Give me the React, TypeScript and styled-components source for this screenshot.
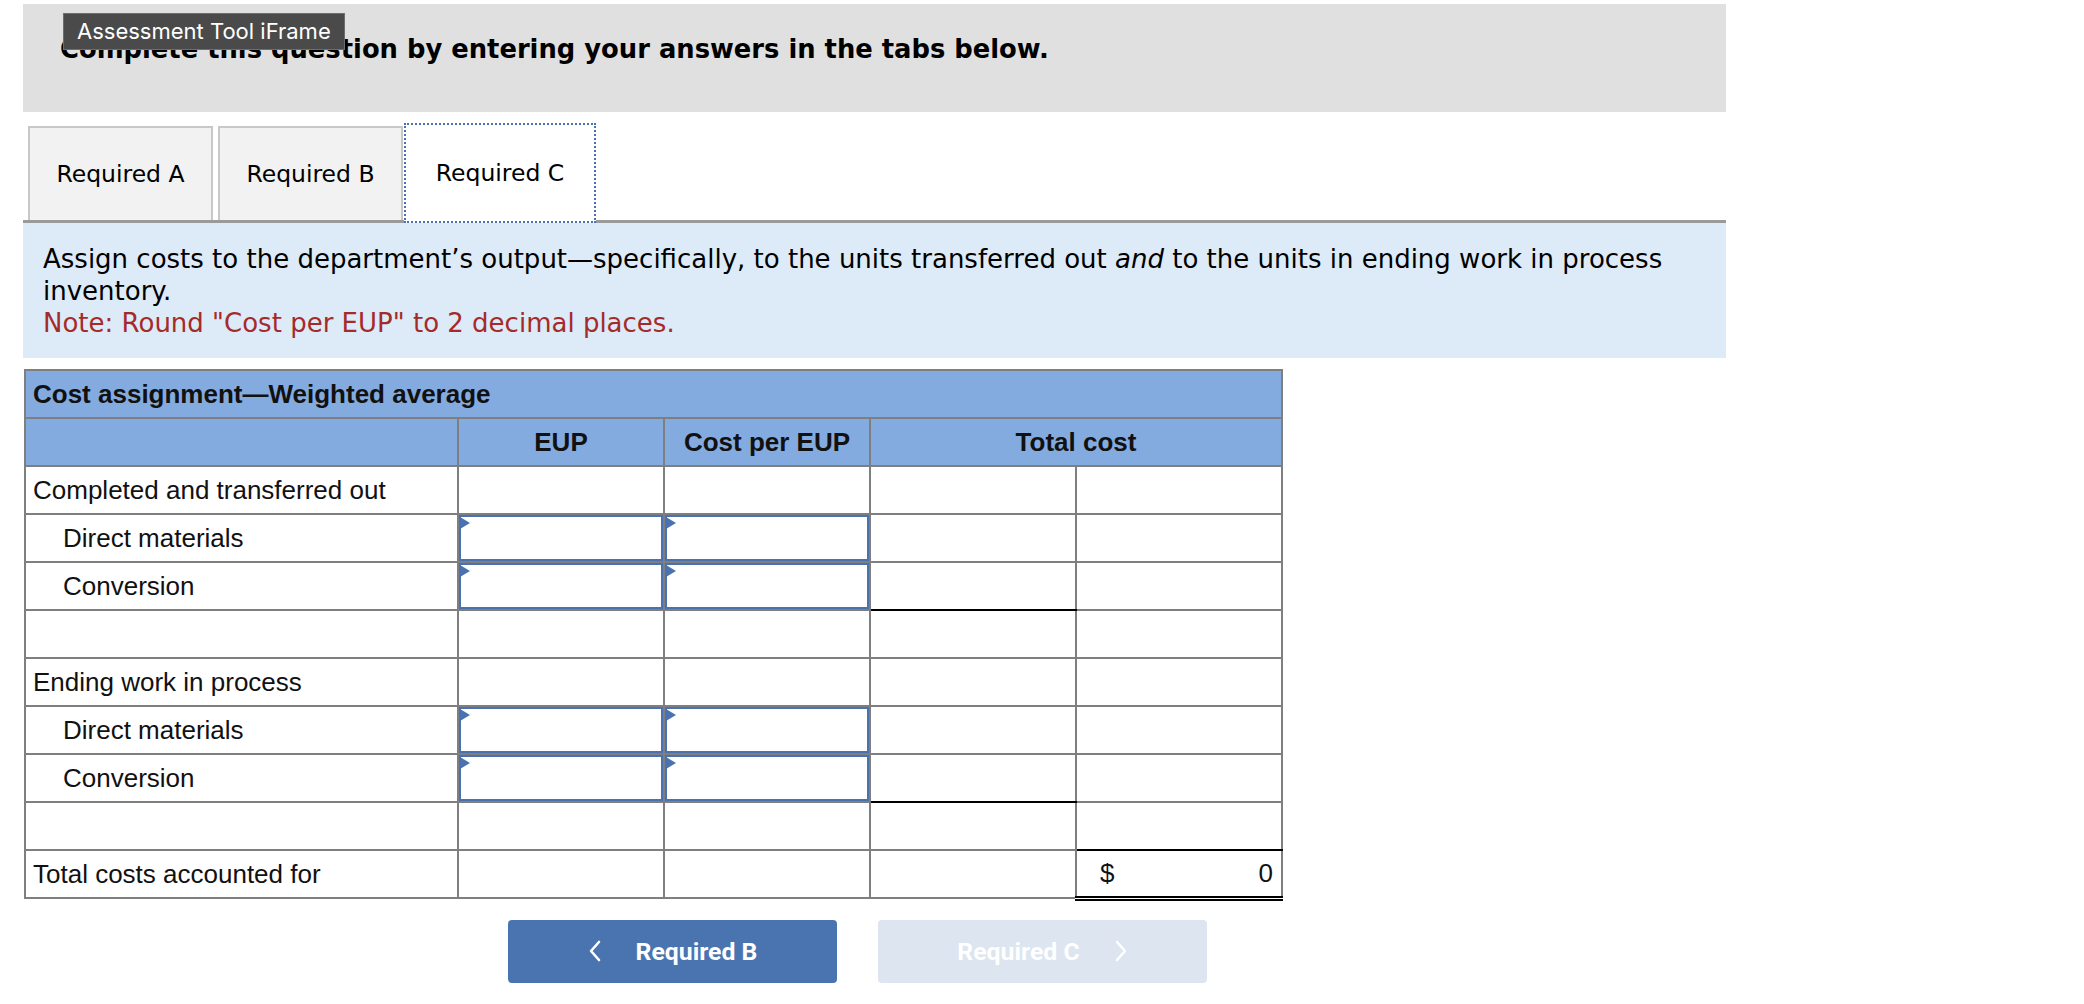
import React from "react";
import styled, { createGlobalStyle } from "styled-components";

const Global = createGlobalStyle`
  html, body { margin: 0; padding: 0; background: #ffffff; }
  body { font-family: "DejaVu Sans", Verdana, sans-serif; color: #000; }
`;

const Page = styled.div`
  width: 1703px;
  padding: 4px 0 0 23px;
`;

const Header = styled.div`
  position: relative;
  height: 108px;
  box-sizing: border-box;
  background: #e0e0e0;
  padding: 30px 0 0 37px;
`;

const Title = styled.h1`
  margin: 0;
  font-family: "DejaVu Sans", Verdana, sans-serif;
  font-weight: 700;
  font-size: 25.8px;
  line-height: 30px;
  color: #000;
  white-space: nowrap;
`;

const Tooltip = styled.div`
  position: absolute;
  left: 40px;
  top: 9px;
  height: 37px;
  box-sizing: border-box;
  padding: 0 13px;
  background: #4a4a4a;
  border: 1px solid #6e6e6e;
  color: #ffffff;
  font-family: Inter, "Noto Sans", sans-serif;
  font-size: 22px;
  line-height: 35px;
  white-space: nowrap;
`;

const TabBar = styled.div`
  display: flex;
  align-items: flex-end;
  gap: 5px;
  margin-top: 11px;
  padding-left: 5px;
  border-bottom: 3px solid #9a9a9a;
`;

const Tab = styled.button<{ $active?: boolean }>`
  display: flex;
  align-items: center;
  justify-content: center;
  box-sizing: border-box;
  padding: 0;
  width: ${(p) => (p.$active ? "192px" : "185px")};
  height: ${(p) => (p.$active ? "100px" : "94px")};
  margin-left: ${(p) => (p.$active ? "-4px" : "0")};
  margin-bottom: ${(p) => (p.$active ? "-3px" : "0")};
  background: ${(p) => (p.$active ? "#ffffff" : "#f2f2f2")};
  border: ${(p) => (p.$active ? "2px dotted #4a72b0" : "2px solid #c8c8c8")};
  border-bottom: ${(p) => (p.$active ? "2px dotted #4a72b0" : "none")};
  font-family: "DejaVu Sans", Verdana, sans-serif;
  font-size: 23.5px;
  color: #000;
  cursor: pointer;
`;

const Instructions = styled.div`
  background: #ddeaf7;
  padding: 20px 20px 19px;
  font-family: "DejaVu Sans", Verdana, sans-serif;
  font-size: 26px;
  line-height: 32px;
  color: #000;
`;

const Line = styled.div<{ $note?: boolean }>`
  white-space: nowrap;
  color: ${(p) => (p.$note ? "#a52a2a" : "#000")};
`;

const Table = styled.table`
  margin: 11px 0 0 1px;
  width: 1257px;
  border-collapse: collapse;
  table-layout: fixed;
  font-family: "Liberation Sans", Arial, sans-serif;
  font-size: 26px;
  color: #111;
`;

const Row = styled.tr`
  height: 48px;
`;

const TitleCell = styled.td`
  background: #84abdf;
  border: 2px solid #7f7f7f;
  padding: 0 0 0 7px;
  font-weight: 700;
  text-align: left;
`;

const HeadCell = styled.th`
  background: #84abdf;
  border: 2px solid #7f7f7f;
  padding: 0;
  font-weight: 700;
  text-align: center;
`;

const LabelCell = styled.td<{ $indent?: boolean }>`
  border: 2px solid #7f7f7f;
  padding: 0 0 0 ${(p) => (p.$indent ? "37px" : "7px")};
  white-space: nowrap;
`;

const Cell = styled.td<{ $underline?: boolean; $total?: boolean }>`
  border: 2px solid #7f7f7f;
  padding: 0;
  ${(p) => (p.$underline ? "border-bottom: 2px solid #000;" : "")}
  ${(p) => (p.$total ? "border-bottom: 5px double #000;" : "")}
`;

const InputWrap = styled.div`
  position: relative;
  height: 46px;
`;

const Input = styled.input`
  display: block;
  box-sizing: border-box;
  width: 100%;
  height: 100%;
  margin: 0;
  border: 2px solid #4a72b0;
  background: #fff;
  font-family: "Liberation Sans", Arial, sans-serif;
  font-size: 25px;
  text-align: right;
  outline: none;
`;

const Marker = styled.span`
  position: absolute;
  left: 1px;
  top: 2px;
  width: 0;
  height: 0;
  border-left: 10px solid #4a72b0;
  border-top: 6.5px solid transparent;
  border-bottom: 6.5px solid transparent;
`;

const TotalValue = styled.div`
  display: flex;
  justify-content: space-between;
  padding: 0 8px 0 23px;
`;

const ButtonRow = styled.div`
  display: flex;
  gap: 41px;
  margin-top: 19px;
  padding-left: 485px;
`;

const NavButton = styled.button<{ $disabled?: boolean }>`
  display: flex;
  align-items: center;
  justify-content: center;
  gap: 34px;
  width: 329px;
  height: 63px;
  border: none;
  border-radius: 4px;
  background: ${(p) => (p.$disabled ? "#dce5f0" : "#4a74b0")};
  color: #ffffff;
  font-family: Roboto, "Liberation Sans", sans-serif;
  font-weight: 700;
  font-size: 24.8px;
  cursor: ${(p) => (p.$disabled ? "default" : "pointer")};
`;

const Chevron = ({ dir }: { dir: "left" | "right" }) => (
  <svg width="14" height="22" viewBox="0 0 14 22" fill="none">
    <polyline
      points={dir === "left" ? "11,2 3,11 11,20" : "3,2 11,11 3,20"}
      stroke="#ffffff"
      strokeWidth="2.6"
      strokeLinecap="round"
      strokeLinejoin="round"
    />
  </svg>
);

const EntryCell = () => (
  <Cell>
    <InputWrap>
      <Input type="text" />
      <Marker />
    </InputWrap>
  </Cell>
);

type RowDef =
  | { kind: "section"; label: string }
  | { kind: "entry"; label: string }
  | { kind: "blank" }
  | { kind: "total"; label: string };

const rows: RowDef[] = [
  { kind: "section", label: "Completed and transferred out" },
  { kind: "entry", label: "Direct materials" },
  { kind: "entry", label: "Conversion" },
  { kind: "blank" },
  { kind: "section", label: "Ending work in process" },
  { kind: "entry", label: "Direct materials" },
  { kind: "entry", label: "Conversion" },
  { kind: "blank" },
  { kind: "total", label: "Total costs accounted for" },
];

export default function App() {
  return (
    <>
      <Global />
      <Page>
        <Header>
          <Title>Complete this question by entering your answers in the tabs below.</Title>
          <Tooltip>Assessment Tool iFrame</Tooltip>
        </Header>

        <TabBar>
          <Tab>Required A</Tab>
          <Tab>Required B</Tab>
          <Tab $active>Required C</Tab>
        </TabBar>

        <Instructions>
          <Line>
            Assign costs to the department’s output—specifically, to the units transferred out <em>and</em> to the
            units in ending work in process
          </Line>
          <Line>inventory.</Line>
          <Line $note>Note: Round "Cost per EUP" to 2 decimal places.</Line>
        </Instructions>

        <Table>
          <colgroup>
            <col style={{ width: 433 }} />
            <col style={{ width: 206 }} />
            <col style={{ width: 206 }} />
            <col style={{ width: 206 }} />
            <col style={{ width: 206 }} />
          </colgroup>
          <tbody>
            <Row>
              <TitleCell colSpan={5}>Cost assignment—Weighted average</TitleCell>
            </Row>
            <Row>
              <HeadCell />
              <HeadCell>EUP</HeadCell>
              <HeadCell>Cost per EUP</HeadCell>
              <HeadCell colSpan={2}>Total cost</HeadCell>
            </Row>
            {rows.map((r, i) => {
              if (r.kind === "entry") {
                const isConv = r.label === "Conversion";
                return (
                  <Row key={i}>
                    <LabelCell $indent>{r.label}</LabelCell>
                    <EntryCell />
                    <EntryCell />
                    <Cell $underline={isConv} />
                    <Cell />
                  </Row>
                );
              }
              if (r.kind === "total") {
                return (
                  <Row key={i}>
                    <LabelCell>{r.label}</LabelCell>
                    <Cell />
                    <Cell />
                    <Cell />
                    <Cell $total>
                      <TotalValue>
                        <span>$</span>
                        <span>0</span>
                      </TotalValue>
                    </Cell>
                  </Row>
                );
              }
              const beforeTotal = i === rows.length - 2;
              return (
                <Row key={i}>
                  <LabelCell>{r.kind === "section" ? r.label : ""}</LabelCell>
                  <Cell />
                  <Cell />
                  <Cell />
                  <Cell $underline={beforeTotal} />
                </Row>
              );
            })}
          </tbody>
        </Table>

        <ButtonRow>
          <NavButton>
            <Chevron dir="left" />
            <span>Required B</span>
          </NavButton>
          <NavButton $disabled>
            <span>Required C</span>
            <Chevron dir="right" />
          </NavButton>
        </ButtonRow>
      </Page>
    </>
  );
}
